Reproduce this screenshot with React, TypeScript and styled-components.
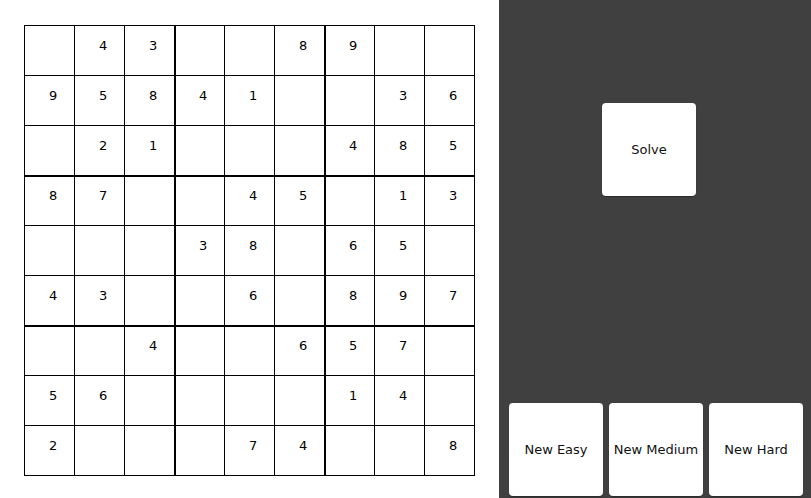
import styled, { createGlobalStyle } from 'styled-components';

const GlobalStyle = createGlobalStyle`
  html, body {
    margin: 0;
    padding: 0;
    background: #ffffff;
    font-family: "DejaVu Sans", "Liberation Sans", sans-serif;
  }
`;

const puzzle = [
  [0, 4, 3, 0, 0, 8, 9, 0, 0],
  [9, 5, 8, 4, 1, 0, 0, 3, 6],
  [0, 2, 1, 0, 0, 0, 4, 8, 5],
  [8, 7, 0, 0, 4, 5, 0, 1, 3],
  [0, 0, 0, 3, 8, 0, 6, 5, 0],
  [4, 3, 0, 0, 6, 0, 8, 9, 7],
  [0, 0, 4, 0, 0, 6, 5, 7, 0],
  [5, 6, 0, 0, 0, 0, 1, 4, 0],
  [2, 0, 0, 0, 7, 4, 0, 0, 8],
];

export const App = () => {
  return (
    <Page>
      <GlobalStyle />
      <BoardArea>
        <Board>
          {puzzle.map((row, r) =>
            row.map((value, c) => (
              <Cell key={`${r}-${c}`} $thickTop={r === 3 || r === 6} $thickLeft={c === 3 || c === 6}>
                {value ? value : ''}
              </Cell>
            ))
          )}
        </Board>
      </BoardArea>
      <Panel>
        <SolveRow>
          <PanelButton>Solve</PanelButton>
        </SolveRow>
        <NewRow>
          <PanelButton>New Easy</PanelButton>
          <PanelButton>New Medium</PanelButton>
          <PanelButton>New Hard</PanelButton>
        </NewRow>
      </Panel>
    </Page>
  );
};

const Page = styled.div`
  display: flex;
  width: 811px;
  height: 498px;
  overflow: hidden;
`;

const BoardArea = styled.div`
  width: 499px;
  flex-shrink: 0;
  padding: 25px 0 0 24px;
  box-sizing: border-box;
  background: #ffffff;
`;

const Board = styled.div`
  display: grid;
  grid-template-columns: repeat(9, 50px);
  grid-template-rows: repeat(9, 50px);
  width: 450px;
  border-right: 1px solid #000;
  border-bottom: 1px solid #000;
`;

const Cell = styled.div<{ $thickTop: boolean; $thickLeft: boolean }>`
  box-sizing: border-box;
  border-top: ${(p) => (p.$thickTop ? 2 : 1)}px solid #000;
  border-left: ${(p) => (p.$thickLeft ? 2 : 1)}px solid #000;
  padding-top: ${(p) => (p.$thickTop ? 12 : 13)}px;
  padding-left: ${(p) => (p.$thickLeft ? 23 : 24)}px;
  font-size: 13px;
  line-height: 13px;
  color: #000;
`;

const Panel = styled.div`
  flex: 1;
  display: flex;
  flex-direction: column;
  justify-content: space-between;
  background: #404040;
  padding: 103px 8px 2px 10px;
`;

const SolveRow = styled.div`
  display: flex;
  padding-left: 93px;
`;

const NewRow = styled.div`
  display: flex;
  gap: 6px;
`;

const PanelButton = styled.div`
  width: 94px;
  height: 93px;
  display: flex;
  align-items: center;
  justify-content: center;
  background: #ffffff;
  border-radius: 4px;
  box-shadow: 0 1px 1px rgba(0, 0, 0, 0.35);
  font-size: 13px;
  color: #111;
  cursor: pointer;
`;

export default App;
